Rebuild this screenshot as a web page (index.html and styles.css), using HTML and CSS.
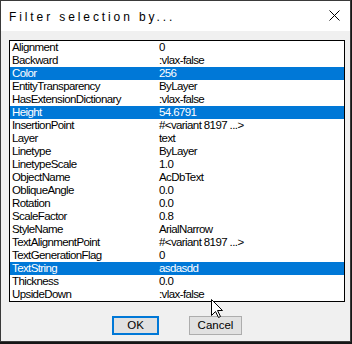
FILE: index.html
```html
<!DOCTYPE html>
<html>
<head>
<meta charset="utf-8">
<link rel="stylesheet" href="styles.css">
</head>
<body>
<div class="window">
  <div class="titlebar">
    <span class="title">Filter selection by...</span>
    <svg class="close" width="12" height="12" viewBox="0 0 12 12"><path d="M0.5 0.5 L10.5 10.5 M10.5 0.5 L0.5 10.5" stroke="#000" stroke-width="1" fill="none"/></svg>
  </div>
  <div class="client">
    <div class="listbox">
      <div class="row"><span>Alignment</span><span>0</span></div>
      <div class="row"><span>Backward</span><span>:vlax-false</span></div>
      <div class="row sel"><span>Color</span><span>256</span></div>
      <div class="row"><span>EntityTransparency</span><span>ByLayer</span></div>
      <div class="row"><span>HasExtensionDictionary</span><span>:vlax-false</span></div>
      <div class="row sel"><span>Height</span><span>54.6791</span></div>
      <div class="row"><span>InsertionPoint</span><span>#&lt;variant 8197 ...&gt;</span></div>
      <div class="row"><span>Layer</span><span>text</span></div>
      <div class="row"><span>Linetype</span><span>ByLayer</span></div>
      <div class="row"><span>LinetypeScale</span><span>1.0</span></div>
      <div class="row"><span>ObjectName</span><span>AcDbText</span></div>
      <div class="row"><span>ObliqueAngle</span><span>0.0</span></div>
      <div class="row"><span>Rotation</span><span>0.0</span></div>
      <div class="row"><span>ScaleFactor</span><span>0.8</span></div>
      <div class="row"><span>StyleName</span><span>ArialNarrow</span></div>
      <div class="row"><span>TextAlignmentPoint</span><span>#&lt;variant 8197 ...&gt;</span></div>
      <div class="row"><span>TextGenerationFlag</span><span>0</span></div>
      <div class="row sel"><span>TextString</span><span>asdasdd</span></div>
      <div class="row"><span>Thickness</span><span>0.0</span></div>
      <div class="row"><span>UpsideDown</span><span>:vlax-false</span></div>
    </div>
    <div class="buttons">
      <button class="btn ok">OK</button>
      <button class="btn cancel">Cancel</button>
    </div>
  </div>
  <svg class="cursor" width="13" height="20" viewBox="0 0 13 20"><path d="M0.5 0.5 L0.5 16.5 L4.5 12.5 L7.5 18.5 L9.5 17.5 L6.5 11.5 L11.5 11.5 Z" fill="#fff" stroke="#000" stroke-width="1" stroke-linejoin="miter"/></svg>
</div>
</body>
</html>
```
FILE: styles.css
```css
html, body {
  margin: 0;
  padding: 0;
}
body {
  background: #161616;
  width: 352px;
  height: 344px;
  overflow: hidden;
}
.window {
  position: relative;
  width: 349px;
  height: 340px;
  border: 1px solid #3a3a3a;
  background: #f0f0f0;
  display: flex;
  flex-direction: column;
}
.titlebar {
  height: 30px;
  background: #fff;
  display: flex;
  align-items: center;
  justify-content: space-between;
  padding: 0 9px 0 8px;
}
.title {
  font-family: "Liberation Sans", Arial, sans-serif;
  font-size: 12px;
  letter-spacing: 2.9px;
  color: #000;
  padding-top: 1px;
}
.close {
  margin-top: -1px;
}
.client {
  display: flex;
  flex-direction: column;
  padding: 9px 0 0 8px;
}
.listbox {
  width: 334px;
  height: 260px;
  border: 1px solid #000;
  background: #fff;
  display: flex;
  flex-direction: column;
}
.row {
  height: 13px;
  display: grid;
  grid-template-columns: 147px 1fr;
  padding-left: 2px;
  font-family: "Liberation Sans", Arial, sans-serif;
  font-size: 11.5px;
  letter-spacing: -0.6px;
  line-height: 13px;
  color: #000;
  white-space: nowrap;
}
.row.sel {
  background: #0078d7;
  color: #fff;
}
.buttons {
  display: flex;
  gap: 30px;
  padding-left: 103px;
  margin-top: 14px;
}
.btn {
  height: 19px;
  margin: 0;
  padding: 0;
  background: #e1e1e1;
  font-family: "Liberation Sans", Arial, sans-serif;
  font-size: 11.5px;
  color: #000;
  line-height: 15px;
}
.ok {
  width: 47px;
  border: 2px solid #0078d7;
}
.cancel {
  width: 53px;
  border: 1px solid #adadad;
}
.cursor {
  position: absolute;
  left: 210px;
  top: 298px;
}
```
